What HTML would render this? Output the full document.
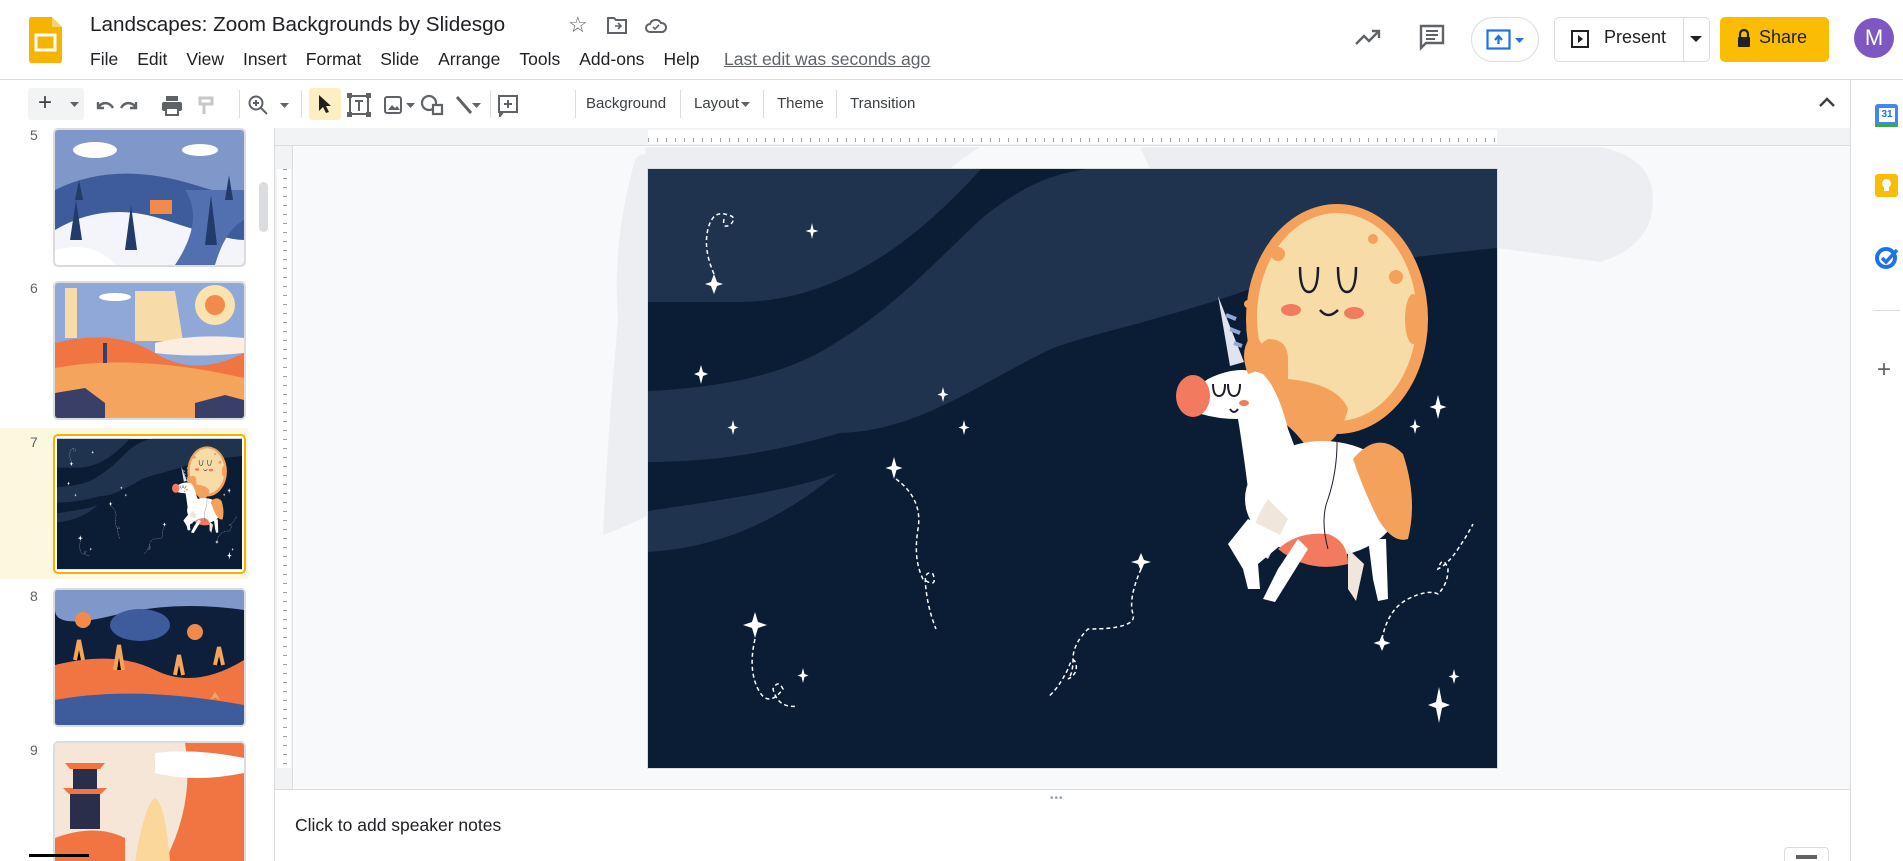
<!DOCTYPE html>
<html><head><meta charset="utf-8">
<style>
*{margin:0;padding:0;box-sizing:border-box}
body{width:1903px;height:861px;overflow:hidden;background:#fff;font-family:"Liberation Sans",Arial,sans-serif;position:relative;color:#202124}
.a{position:absolute}
.menu span{margin-right:19px}
.tb{color:#3c4043;font-size:15px}
</style></head><body>

<!-- Header -->
<svg class="a" style="left:29px;top:17px" width="33" height="46" viewBox="0 0 33 46">
<path d="M3 0H23L33 10V43Q33 46 30 46H3Q0 46 0 43V3Q0 0 3 0Z" fill="#f4b400"/>
<path d="M23 0V10H33Z" fill="#f8d36b"/>
<rect x="7" y="18" width="19" height="15" fill="none" stroke="#fff" stroke-width="3"/>
</svg>
<div class="a" style="left:90px;top:13px;font-size:20.7px;color:#202124">Landscapes: Zoom Backgrounds by Slidesgo</div>
<div class="a" style="left:568px;top:12px;font-size:22px;color:#5f6368">☆</div>
<svg class="a" style="left:607px;top:16px" width="20" height="18" viewBox="0 0 20 18"><path d="M1 2h6l2 2h10v13H1z" fill="none" stroke="#5f6368" stroke-width="2"/><path d="M8 10h6M11 7l3 3-3 3" fill="none" stroke="#5f6368" stroke-width="1.6"/></svg>
<svg class="a" style="left:645px;top:15px" width="22" height="20" viewBox="0 0 22 20"><path d="M5 17a4 4 0 0 1 0-8 6 6 0 0 1 11-1 4.5 4.5 0 0 1 1 9z" fill="none" stroke="#5f6368" stroke-width="2"/><path d="M8 12l2 2 4-4" fill="none" stroke="#5f6368" stroke-width="1.6"/></svg>
<div class="a menu" style="left:90px;top:49px;font-size:17.5px;color:#202124;white-space:nowrap"><span>File</span><span>Edit</span><span>View</span><span>Insert</span><span>Format</span><span>Slide</span><span>Arrange</span><span>Tools</span><span>Add-ons</span><span>Help</span></div>
<div class="a" style="left:724px;top:49px;font-size:17.5px;color:#5f6368;text-decoration:underline">Last edit was seconds ago</div>

<svg class="a" style="left:1354px;top:28px" width="28" height="18" viewBox="0 0 28 18"><path d="M2 16l8-8 5 5 9-9M18 3h7v7" fill="none" stroke="#5f6368" stroke-width="2.4"/></svg>
<svg class="a" style="left:1418px;top:23px" width="28" height="28" viewBox="0 0 28 28"><path d="M3 3h22v17H8l-5 5z" fill="none" stroke="#5f6368" stroke-width="2.4"/><path d="M8 8h12M8 12h12M8 16h9" stroke="#5f6368" stroke-width="2"/></svg>
<div class="a" style="left:1471px;top:17px;width:68px;height:45px;border:1px solid #dadce0;border-radius:23px"></div>
<svg class="a" style="left:1486px;top:29px" width="40" height="22" viewBox="0 0 40 22"><rect x="1.5" y="1.5" width="22" height="18" fill="none" stroke="#1a73e8" stroke-width="2.2"/><path d="M12.5 15V8M9 11l3.5-4 3.5 4" fill="none" stroke="#1a73e8" stroke-width="2.2"/><path d="M29 9h9l-4.5 5z" fill="#1a73e8"/></svg>
<div class="a" style="left:1554px;top:17px;width:156px;height:45px;border:1px solid #dadce0;border-radius:5px"></div>
<div class="a" style="left:1683px;top:17px;width:1px;height:45px;background:#dadce0"></div>
<svg class="a" style="left:1571px;top:30px" width="18" height="18" viewBox="0 0 18 18"><rect x="1" y="1" width="16" height="16" fill="none" stroke="#202124" stroke-width="2"/><path d="M7 5l5 4-5 4z" fill="#202124"/></svg>
<div class="a" style="left:1604px;top:27px;font-size:18px;color:#202124">Present</div>
<svg class="a" style="left:1690px;top:36px" width="12" height="7"><path d="M0 0h12L6 6z" fill="#202124"/></svg>
<div class="a" style="left:1720px;top:17px;width:109px;height:45px;background:#fbbc04;border-radius:5px"></div>
<svg class="a" style="left:1737px;top:29px" width="14" height="18" viewBox="0 0 14 18"><path d="M3 8V5a4 4 0 0 1 8 0v3" fill="none" stroke="#202124" stroke-width="2.2"/><rect x="1" y="8" width="12" height="10" rx="1" fill="#202124"/></svg>
<div class="a" style="left:1759px;top:27px;font-size:18px;color:#202124">Share</div>
<div class="a" style="left:1854px;top:18px;width:40px;height:40px;border-radius:50%;background:#7e57c2;color:#fff;font-size:22px;text-align:center;line-height:40px">M</div>

<div class="a" style="left:0;top:79px;width:1903px;height:1px;background:#dadce0"></div>

<!-- Toolbar -->
<div class="a" style="left:28px;top:88px;width:56px;height:32px;background:#f1f3f4;border-radius:3px"></div>
<div class="a tb" style="left:38px;top:89px;font-size:24px">+</div>
<svg class="a" style="left:70px;top:102px" width="9" height="5"><path d="M0 0h9L4.5 5z" fill="#5f6368"/></svg>
<svg class="a" style="left:94px;top:96px" width="120" height="20" viewBox="0 0 120 20">
<path d="M4 6v6h6M4 12c3-6 11-7 15 0" fill="none" stroke="#5f6368" stroke-width="2.4"/>
<path d="M42 6v6h-6M42 12c-3-6-11-7-15 0" fill="none" stroke="#5f6368" stroke-width="2.4"/>
<rect x="72" y="0" width="12" height="5" fill="#5f6368"/><rect x="68" y="6" width="20" height="9" rx="2" fill="#5f6368"/><rect x="72" y="12" width="12" height="7" fill="#fff" stroke="#5f6368" stroke-width="2"/>
<path d="M106 2h12v6h-12zM110 8v10" fill="none" stroke="#c7c7c7" stroke-width="3"/>
</svg>
<div class="a" style="left:239px;top:90px;width:1px;height:28px;background:#dadce0"></div>
<svg class="a" style="left:247px;top:94px" width="46" height="22" viewBox="0 0 46 22"><circle cx="9" cy="9" r="6.5" fill="none" stroke="#5f6368" stroke-width="2"/><path d="M14 14l6 6M9 6v6M6 9h6" stroke="#5f6368" stroke-width="2"/><path d="M33 9h9l-4.5 5z" fill="#5f6368"/></svg>
<div class="a" style="left:301px;top:90px;width:1px;height:28px;background:#dadce0"></div>
<div class="a" style="left:309px;top:88px;width:32px;height:32px;background:#feefc3;border-radius:3px"></div>
<svg class="a" style="left:318px;top:94px" width="14" height="20" viewBox="0 0 14 20"><path d="M1 1v16l4-4 3 6 3-1-3-6h5z" fill="#202124"/></svg>
<svg class="a" style="left:347px;top:93px" width="180" height="24" viewBox="0 0 180 24">
<rect x="3" y="3" width="18" height="18" fill="none" stroke="#5f6368" stroke-width="2"/><rect x="0" y="0" width="5" height="5" fill="#5f6368"/><rect x="19" y="0" width="5" height="5" fill="#5f6368"/><rect x="0" y="19" width="5" height="5" fill="#5f6368"/><rect x="19" y="19" width="5" height="5" fill="#5f6368"/><path d="M8 8h8M12 8v10" stroke="#5f6368" stroke-width="2"/>
<rect x="38" y="4" width="16" height="16" rx="2" fill="none" stroke="#5f6368" stroke-width="2"/><path d="M41 17l4-5 3 3 2-2 3 4z" fill="#5f6368"/><path d="M59 10h9l-4.5 5z" fill="#5f6368"/>
<circle cx="82" cy="10" r="7" fill="none" stroke="#5f6368" stroke-width="2.2"/><path d="M86 12v9h9v-9z" fill="#fff" stroke="#5f6368" stroke-width="2.2"/>
<path d="M110 4l14 16" stroke="#5f6368" stroke-width="3"/><path d="M125 10h9l-4.5 5z" fill="#5f6368"/>
<rect x="152" y="3" width="18" height="16" fill="none" stroke="#5f6368" stroke-width="2"/><path d="M156 19l-3 4v-4zM161 7v8M157 11h8" stroke="#5f6368" stroke-width="2"/>
</svg>
<div class="a" style="left:490px;top:90px;width:1px;height:28px;background:#dadce0"></div>
<div class="a" style="left:575px;top:90px;width:1px;height:28px;background:#dadce0"></div>
<div class="a" style="left:680px;top:90px;width:1px;height:28px;background:#dadce0"></div>
<div class="a" style="left:763px;top:90px;width:1px;height:28px;background:#dadce0"></div>
<div class="a" style="left:836px;top:90px;width:1px;height:28px;background:#dadce0"></div>
<div class="a tb" style="left:586px;top:95px">Background</div>
<div class="a tb" style="left:694px;top:95px">Layout</div>
<svg class="a" style="left:741px;top:102px" width="9" height="5"><path d="M0 0h9L4.5 5z" fill="#5f6368"/></svg>
<div class="a tb" style="left:777px;top:95px">Theme</div>
<div class="a tb" style="left:850px;top:95px">Transition</div>
<svg class="a" style="left:1819px;top:97px" width="16" height="10"><path d="M1 9l7-7 7 7" fill="none" stroke="#3c4043" stroke-width="2.4"/></svg>

<!-- Right side panel -->
<div class="a" style="left:1850px;top:80px;width:1px;height:781px;background:#dadce0"></div>
<div class="a" style="left:1875px;top:104px;width:23px;height:23px;border-radius:3px;background:#4285f4"></div>
<div class="a" style="left:1879px;top:108px;width:16px;height:14px;background:#fff;font-size:10px;color:#1a73e8;text-align:center;line-height:14px;font-weight:bold">31</div>
<div class="a" style="left:1875px;top:124px;width:23px;height:3px;background:#34a853"></div>
<div class="a" style="left:1875px;top:174px;width:23px;height:23px;border-radius:3px;background:#fbbc04"></div>
<div class="a" style="left:1882px;top:179px;width:9px;height:9px;border-radius:50%;background:#fff"></div>
<div class="a" style="left:1884px;top:187px;width:5px;height:4px;background:#fff"></div>
<svg class="a" style="left:1875px;top:245px" width="24" height="24" viewBox="0 0 24 24"><circle cx="11" cy="13" r="9" fill="none" stroke="#1a73e8" stroke-width="4"/><path d="M7 13l4 4 11-12" fill="none" stroke="#1a73e8" stroke-width="3.5"/></svg>
<div class="a" style="left:1873px;top:310px;width:27px;height:1px;background:#dadce0"></div>
<div class="a" style="left:1877px;top:356px;font-size:24px;color:#5f6368;font-weight:300">+</div>

<!-- Left panel -->
<div class="a" style="left:274px;top:128px;width:1px;height:733px;background:#dadce0"></div>
<div class="a" style="left:0;top:428px;width:248px;height:151px;background:#fef7e0"></div>
<div class="a" style="left:259px;top:182px;width:9px;height:50px;border-radius:5px;background:#dadce0"></div>
<div class="a" style="left:30px;top:127px;font-size:14px;color:#5f6368">5</div>
<div class="a" style="left:30px;top:280px;font-size:14px;color:#5f6368">6</div>
<div class="a" style="left:30px;top:434px;font-size:14px;color:#5f6368">7</div>
<div class="a" style="left:30px;top:588px;font-size:14px;color:#5f6368">8</div>
<div class="a" style="left:30px;top:742px;font-size:14px;color:#5f6368">9</div>

<svg class="a" style="left:53px;top:128px;border:2px solid #dadce0;border-radius:5px" width="193" height="139" viewBox="0 0 189 135">
<rect width="189" height="135" fill="#7f97c9"/>
<ellipse cx="40" cy="20" rx="22" ry="8" fill="#fff"/><ellipse cx="145" cy="20" rx="18" ry="6" fill="#fff"/>
<path d="M0 60Q60 30 140 55T189 50V135H0z" fill="#3e5b9b"/>
<path d="M0 100Q50 70 110 90T189 110V135H0z" fill="#f3f5fb"/>
<path d="M130 60Q150 90 120 135H160Q170 100 189 90V60z" fill="#5270b0"/>
<rect x="95" y="70" width="22" height="14" fill="#f28a4b"/>
<path d="M15 110l6-40 6 40zM70 120l6-45 6 45zM150 115l6-50 6 50zM170 70l4-25 4 25zM20 70l4-20 4 20z" fill="#233a6b"/>
<path d="M0 135V120Q40 110 60 135z" fill="#fff"/>
</svg>
<svg class="a" style="left:53px;top:281px;border:2px solid #dadce0;border-radius:5px" width="193" height="139" viewBox="0 0 189 135">
<rect width="189" height="135" fill="#8fa8d8"/>
<circle cx="160" cy="22" r="20" fill="#fbe3b0"/><circle cx="160" cy="22" r="10" fill="#f28a4b"/>
<path d="M10 5h12v50H10zM80 8h40l8 50H80z" fill="#f7dcaa"/>
<ellipse cx="60" cy="14" rx="16" ry="4" fill="#fff"/>
<path d="M0 60Q60 45 100 70T189 70V135H0z" fill="#f07543"/>
<path d="M100 60Q140 50 189 55V70Q140 75 100 70z" fill="#fbeee0"/>
<path d="M0 85Q80 70 189 95V135H0z" fill="#f5a45b"/>
<path d="M0 110l30-5 20 15v15H0zM140 120l30-8 19 5v18h-49z" fill="#3a3f6a"/>
<rect x="48" y="60" width="4" height="20" fill="#3a3f6a"/>
</svg>
<div class="a" style="left:53px;top:434px;width:193px;height:140px;border:2px solid #f4b400;border-radius:5px;background:#fff"></div>
<svg class="a" style="left:57px;top:438px" width="185" height="132" viewBox="0 0 849 599"><use href="#slide"/></svg>
<svg class="a" style="left:53px;top:588px;border:2px solid #dadce0;border-radius:5px" width="193" height="139" viewBox="0 0 189 135">
<rect width="189" height="135" fill="#0e1f3b"/>
<path d="M0 0H189V20Q120 10 60 25T0 20z" fill="#7f97c9"/>
<ellipse cx="85" cy="35" rx="30" ry="16" fill="#3e5b9b"/>
<path d="M0 75Q60 60 100 80T189 70V135H0z" fill="#f07543"/>
<path d="M0 110Q80 95 189 115V135H0z" fill="#3e5b9b"/>
<circle cx="28" cy="30" r="8" fill="#f28a4b"/><circle cx="140" cy="42" r="8" fill="#f28a4b"/>
<path d="M20 70l4-20 4 20M60 80l4-25 4 25M120 85l4-20 4 20M160 75l4-18 4 18" stroke="#f5a45b" stroke-width="4"/>
<path d="M155 110l5-8 5 8-8-4h7z" fill="#f5a45b"/>
</svg>
<svg class="a" style="left:53px;top:741px;border:2px solid #dadce0;border-bottom:none;border-radius:5px 5px 0 0" width="193" height="120" viewBox="0 0 189 118">
<rect width="189" height="118" fill="#f6e6d8"/>
<path d="M130 0H189V118H110Q140 60 130 0z" fill="#f07543"/>
<path d="M100 10Q140 5 189 15V30Q140 40 100 30z" fill="#fff"/>
<path d="M0 95Q40 80 70 95V118H0z" fill="#f07543"/>
<path d="M10 20h40l-5 6H15zM8 45h44l-6 6H14z" fill="#f07543"/>
<rect x="18" y="26" width="24" height="20" fill="#2a2e4a"/><rect x="15" y="51" width="30" height="35" fill="#2a2e4a"/>
<path d="M80 118Q90 60 100 55Q110 60 115 118z" fill="#fbd79c"/>
</svg>
<div class="a" style="left:29px;top:854px;width:60px;height:3px;background:#000"></div>

<!-- rulers -->
<div class="a" style="left:275px;top:128px;width:1575px;height:18px;background:#f1f3f4;border-bottom:1px solid #dadce0"></div>
<div class="a" style="left:648px;top:130px;width:849px;height:14px;background:#fff repeating-linear-gradient(90deg,#9aa0a6 0 1px,transparent 1px 9px) 0 8px/849px 4px no-repeat"></div>
<div class="a" style="left:275px;top:146px;width:18px;height:643px;background:#f1f3f4;border-right:1px solid #dadce0"></div>
<div class="a" style="left:277px;top:169px;width:14px;height:599px;background:#fff repeating-linear-gradient(180deg,#9aa0a6 0 1px,transparent 1px 9px) 6px 0/4px 599px no-repeat"></div>

<!-- canvas -->
<div class="a" style="left:294px;top:147px;width:1556px;height:642px;background:#f8f9fa"></div>
<svg class="a" style="left:294px;top:147px" width="1556" height="642" viewBox="294 147 1556 642">
<path d="M635 160Q612 240 618 320L612 390Q606 470 603 535Q630 525 648 515V155Q640 152 635 160Z" fill="#eceef2"/>
<path d="M645 147H980Q960 160 950 169H648Z" fill="#eceef2"/>
<path d="M1140 147H1600Q1665 160 1650 220Q1640 250 1600 262Q1550 255 1497 248V169H1150Z" fill="#eceef2"/>
</svg>

<!-- slide -->
<svg class="a" style="left:647px;top:168px;border:1px solid #dadce0" width="851" height="601" viewBox="0 0 849 599">
<defs>
<symbol id="slide" viewBox="0 0 849 599">
<rect width="849" height="599" fill="#0b1c35"/>
<path d="M0 0H333C270 70 190 133 90 133H0Z" fill="#1f334f"/>
<path d="M440 0H849V79C760 88 660 100 600 121C500 155 440 165 403 180C330 215 270 262 192 264C120 285 60 293 0 293V222C90 218 150 200 192 171C250 135 290 90 333 50C370 20 400 5 440 0Z" fill="#1f334f"/>
<path d="M0 342C80 330 150 320 189 304C140 345 80 378 0 383Z" fill="#1f334f"/>
<g fill="#fff">
<path d="M164 54l1.5 6.5 5 1.5-5 1.5-1.5 6.5-1.5-6.5-5-1.5 5-1.5z"/>
<path d="M53 196l2 7 5 2-5 2-2 8-2-8-5-2 5-2z"/>
<path d="M85 251l1.5 6 4 1.5-4 1.5-1.5 6-1.5-6-4-1.5 4-1.5z"/>
<path d="M295 218l1.5 6 4 1.5-4 1.5-1.5 6-1.5-6-4-1.5 4-1.5z"/>
<path d="M316 251l1.5 6 4 1.5-4 1.5-1.5 6-1.5-6-4-1.5 4-1.5z"/>
<path d="M246 288l2.5 9 6 2-6 2-2.5 9-2.5-9-6-2 6-2z"/>
<path d="M107 443l3 10 9 3-9 3-3 10-3-10-9-3 9-3z"/>
<path d="M155 499l1.5 6 4 1.5-4 1.5-1.5 6-1.5-6-4-1.5 4-1.5z"/>
<path d="M493 384l3 7 7 2-7 2-3 7-3-7-7-2 7-2z"/>
<path d="M734 466l2.5 6 6 2-6 2-2.5 6-2.5-6-6-2 6-2z"/>
<path d="M790 226l2.5 10 6 2-6 2-2.5 10-2.5-10-6-2 6-2z"/>
<path d="M767 250l1.5 6 4 1.5-4 1.5-1.5 6-1.5-6-4-1.5 4-1.5z"/>
<path d="M806 500l1.5 6 4 1.5-4 1.5-1.5 6-1.5-6-4-1.5 4-1.5z"/>
<path d="M791 518l3 15 8 3-8 3-3 15-3-15-8-3 8-3z"/>
<path d="M66 105l3 8 6 2-6 2-3 8-3-8-6-2 6-2z"/>
</g>
<g fill="none" stroke="#fff" stroke-width="1.5" stroke-dasharray="4 3">
<path d="M66 105Q55 80 60 60T80 46Q90 48 82 56Q74 60 76 50"/>
<path d="M248 310Q275 330 270 360T275 410Q290 420 285 405Q275 400 278 420Q280 440 288 460"/>
<path d="M107 470Q100 500 110 520T135 520Q130 510 125 520Q130 540 150 537"/>
<path d="M493 400Q480 430 485 445T440 460Q425 475 425 490Q425 505 420 510Q430 505 428 495Q425 485 420 500Q410 520 400 528"/>
<path d="M734 470Q740 440 760 430T790 425Q800 415 800 400Q795 385 790 400Q800 395 810 380Q820 365 825 355"/>
</g>
<ellipse cx="689" cy="150" rx="91" ry="115" fill="#f4a15b"/>
<ellipse cx="689" cy="148" rx="80" ry="104" fill="#f7dca8"/>
<g fill="#f4a15b"><circle cx="630" cy="85" r="7"/><circle cx="725" cy="70" r="5"/><circle cx="748" cy="108" r="7"/><circle cx="618" cy="190" r="8"/><circle cx="600" cy="135" r="4"/><ellipse cx="765" cy="150" rx="8" ry="25"/></g>
<path d="M652 98q0 25 9 25t9-25M690 98q0 25 9 25t9-25M672 141q8 10 18 0" fill="none" stroke="#1b1b2b" stroke-width="2.5"/>
<ellipse cx="643" cy="141" rx="10" ry="6" fill="#f27a5e"/><ellipse cx="706" cy="144" rx="10" ry="6" fill="#f27a5e"/>
<path d="M570 127l26 66-14 4z" fill="#dfe4ef"/>
<path d="M578 146l10 4M582 160l10 4M586 174l8 3" stroke="#8fa8d8" stroke-width="4"/>
<path d="M605 220Q600 180 620 170Q640 170 640 190L640 210Q690 215 700 240Q690 280 660 280Q640 250 610 240Z" fill="#f4a15b"/>
<path d="M560 210Q590 195 615 205Q630 220 640 260L655 300Q640 320 630 330L600 320Q595 280 590 250Q570 250 553 245Q538 225 560 210Z" fill="#fff"/>
<ellipse cx="545" cy="227" rx="17" ry="21" fill="#f27a5e"/>
<path d="M600 205Q590 180 605 165Q620 175 615 200Z" fill="#f4a15b"/>
<ellipse cx="675" cy="330" rx="78" ry="58" fill="#fff"/>
<path d="M705 290Q730 260 755 285Q770 330 760 370Q745 375 730 350Q715 320 705 290Z" fill="#f4a15b"/>
<path d="M630 380Q660 405 700 395Q700 372 680 365Q650 362 630 380Z" fill="#f27a5e"/>
<path d="M620 330Q600 360 605 380L620 390Q630 370 640 350Z" fill="#f1e6dc"/>
<path d="M600 350L580 375L595 400L600 420L612 420L610 395L640 370Z" fill="#fff"/>
<path d="M650 370L630 400L615 430L627 433L660 380Z" fill="#fff"/>
<path d="M700 380L700 420L708 432L716 395Z" fill="#f1e6dc"/>
<path d="M720 370L725 410L730 432L740 430L738 370Z" fill="#fff"/>
<path d="M565 215q0 12 6 12t6-12M580 215q0 12 6 12t6-12M582 240q4 6 8 0" fill="none" stroke="#1b1b2b" stroke-width="2"/>
<ellipse cx="596" cy="234" rx="5" ry="3" fill="#f27a5e"/>
<path d="M689 265Q690 300 680 330Q672 350 680 380" fill="none" stroke="#1b1b2b" stroke-width="1"/>
</symbol>
</defs>
<use href="#slide"/>
</svg>

<!-- notes -->
<div class="a" style="left:275px;top:789px;width:1575px;height:1px;background:#dadce0"></div>
<div class="a" style="left:1050px;top:793px;font-size:10px;color:#9aa0a6;letter-spacing:1px">•••</div>
<div class="a" style="left:295px;top:815px;font-size:17.5px;color:#202124">Click to add speaker notes</div>
<div class="a" style="left:1784px;top:847px;width:45px;height:14px;border:1px solid #dadce0;border-bottom:none;border-radius:4px 4px 0 0;background:#fff"></div>
<div class="a" style="left:1796px;top:855px;width:21px;height:4px;background:#5f6368"></div>
</body></html>
